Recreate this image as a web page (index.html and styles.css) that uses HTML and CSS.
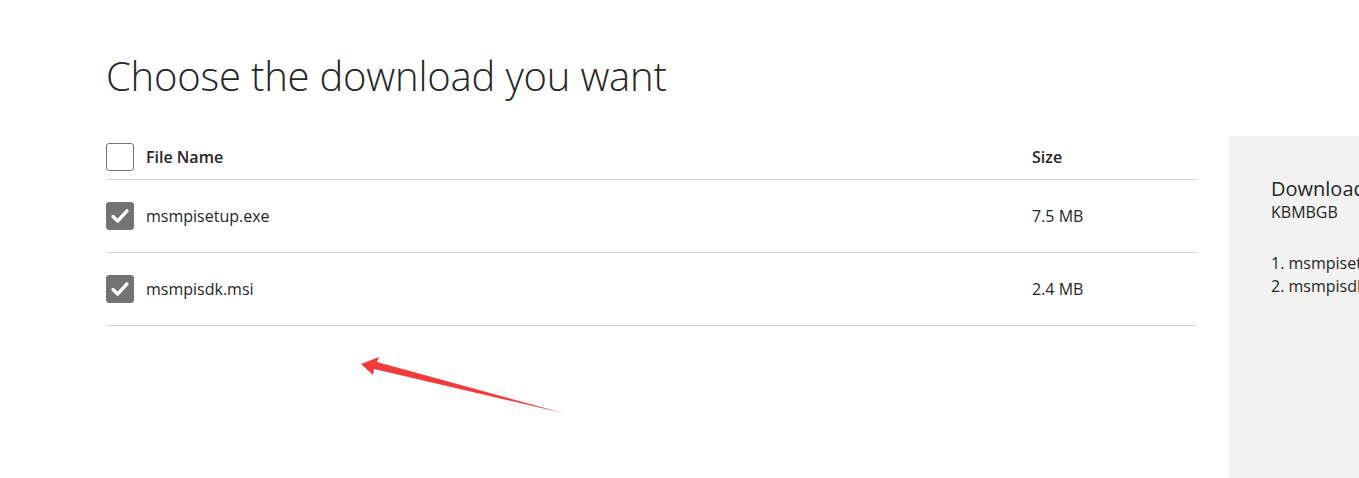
FILE: index.html
```html
<!DOCTYPE html>
<html lang="en">
<head>
    <meta charset="UTF-8"/>
    <title>Choose the download you want</title>
    <link rel="stylesheet" href="styles.css">
</head>
<body>
    <div class="page">
        <div class="main">
            <h1>Choose the download you want</h1>

            <div class="file-table">
                <div class="row head-row">
                    <span class="check"></span>
                    <span class="name">File Name</span>
                    <span class="size">Size</span>
                </div>
                <div class="row">
                    <span class="check checked">
                        <svg viewBox="0 0 28 28" width="28" height="28"><path d="M6.5 14.5l5 5 10-11" fill="none" stroke="#fff" stroke-width="3.6" stroke-linecap="round" stroke-linejoin="round"/></svg>
                    </span>
                    <span class="name">msmpisetup.exe</span>
                    <span class="size">7.5 MB</span>
                </div>
                <div class="row">
                    <span class="check checked">
                        <svg viewBox="0 0 28 28" width="28" height="28"><path d="M6.5 14.5l5 5 10-11" fill="none" stroke="#fff" stroke-width="3.6" stroke-linecap="round" stroke-linejoin="round"/></svg>
                    </span>
                    <span class="name">msmpisdk.msi</span>
                    <span class="size">2.4 MB</span>
                </div>
            </div>
        </div>

        <div class="summary">
            <div class="summary-title">Download Summary:</div>
            <div class="summary-size">KBMBGB</div>
            <ol class="summary-list">
                <li>msmpisetup.exe</li>
                <li>msmpisdk.msi</li>
            </ol>
        </div>
    </div>

    <!-- annotation arrow drawn over the page -->
    <svg class="arrow" width="1359" height="478" viewBox="0 0 1359 478">
        <polygon points="361,364 379,357 377,362 563,413 374,369 373,375" fill="#f23c3c"/>
    </svg>
</body>
</html>
```

FILE: styles.css
```css
html, body {
    margin: 0;
    padding: 0;
    background: #ffffff;
    overflow: hidden;
}
body {
    color: #262626;
    font-family: "Open Sans", "Noto Sans", Arial, sans-serif;
    width: 1359px;
    height: 478px;
    position: relative;
}
.page {
    display: flex;
    gap: 33px;
    padding-left: 106px;
}
.main {
    width: 1090px;
    flex-shrink: 0;
}
h1 {
    margin: 0;
    padding-top: 50px;
    height: 135px;
    box-sizing: border-box;
    font-size: 40px;
    font-weight: 300;
    line-height: 52px;
    letter-spacing: -0.2px;
    color: #262626;
}
.file-table {
    display: flex;
    flex-direction: column;
}
.row {
    display: flex;
    align-items: center;
    height: 72px;
    border-bottom: 1px solid #d2d2d2;
    font-size: 16px;
}
.head-row {
    height: 43px;
    padding-bottom: 1px;
    font-weight: 600;
}
.check {
    width: 28px;
    height: 28px;
    box-sizing: border-box;
    border: 1.5px solid #767676;
    border-radius: 3px;
    flex-shrink: 0;
}
.check.checked {
    background: #737373;
    border-color: #737373;
    display: flex;
    align-items: center;
    justify-content: center;
}
.check svg {
    display: block;
}
.name {
    margin-left: 12px;
    flex: 1;
}
.size {
    width: 164px;
    padding-left: 2px;
}
.summary {
    margin-top: 136px;
    width: 130px;
    height: 342px;
    flex-shrink: 0;
    background: #f2f2f2;
    padding: 40px 0 40px 42px;
    box-sizing: border-box;
    white-space: nowrap;
    overflow: hidden;
}
.summary-title {
    font-size: 20px;
    line-height: 26px;
}
.summary-size {
    font-size: 16px;
    line-height: 20px;
}
.summary-list {
    margin: 30px 0 0;
    padding-left: 0;
    list-style-position: inside;
    font-size: 16px;
    line-height: 23px;
}
.arrow {
    position: absolute;
    left: 0;
    top: 0;
    pointer-events: none;
}
```
